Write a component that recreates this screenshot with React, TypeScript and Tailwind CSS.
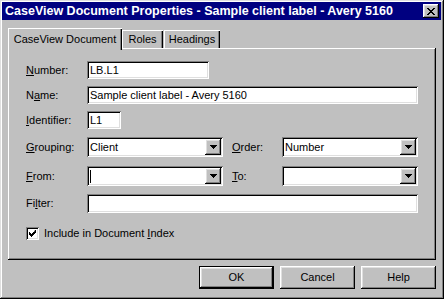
import React from "react";

const SUNKEN =
  "shadow-[inset_1px_1px_0_#808080,inset_-1px_-1px_0_#ffffff,inset_2px_2px_0_#000000,inset_-2px_-2px_0_#dfdfdf]";
const RAISED =
  "shadow-[inset_-1px_-1px_0_#000000,inset_1px_1px_0_#ffffff,inset_-2px_-2px_0_#808080,inset_2px_2px_0_#dfdfdf]";

function U({ children }: { children: React.ReactNode }) {
  return <span className="underline underline-offset-[1px]">{children}</span>;
}

function Label({ w, children }: { w: number; children: React.ReactNode }) {
  return (
    <div className="shrink-0 text-black" style={{ width: w }}>
      {children}
    </div>
  );
}

function Edit({ w, h = 18, value = "", caret = false }: { w: number; h?: number; value?: string; caret?: boolean }) {
  return (
    <div className={`bg-white ${SUNKEN} flex items-center pl-[3px] shrink-0`} style={{ width: w, height: h }}>
      {caret && <div className="w-[1px] h-[13px] bg-black" />}
      <span className="whitespace-nowrap leading-none">{value}</span>
    </div>
  );
}

function Arrow() {
  return (
    <svg width="7" height="4" viewBox="0 0 7 4" className="block">
      <path d="M0 0h7v1h-1v1h-1v1h-1v1h-1v-1h-1v-1h-1v-1h-1z" fill="#000" />
    </svg>
  );
}

function Combo({ w, value = "", caret = false }: { w: number; value?: string; caret?: boolean }) {
  return (
    <div className={`bg-white ${SUNKEN} flex items-center p-[2px] shrink-0`} style={{ width: w, height: 20 }}>
      <div className="flex-1 flex items-center pl-[1px] h-full">
        {caret && <div className="w-[1px] h-[13px] bg-black" />}
        <span className="whitespace-nowrap leading-none">{value}</span>
      </div>
      <div className={`w-[16px] h-[16px] bg-[#c0c0c0] ${RAISED} flex items-center justify-center`}>
        <Arrow />
      </div>
    </div>
  );
}

function Button({ label, def = false }: { label: string; def?: boolean }) {
  return (
    <div
      className={`w-[75px] h-[23px] flex items-center justify-center bg-[#c0c0c0] ${
        def ? "border border-black" : ""
      }`}
    >
      <div className={`w-full h-full flex items-center justify-center ${RAISED}`}>{label}</div>
    </div>
  );
}

export default function App() {
  return (
    <div
      className="w-[444px] h-[299px] bg-[#c0c0c0] flex flex-col text-[11px] text-black shadow-[inset_-1px_-1px_0_#000000,inset_1px_1px_0_#dfdfdf,inset_-2px_-2px_0_#808080,inset_2px_2px_0_#ffffff] overflow-hidden"
      style={{ fontFamily: '"Liberation Sans", Arial, sans-serif' }}
    >
      {/* Title bar */}
      <div className="mt-[2px] ml-[2px] mr-[3px] h-[18px] bg-[#000080] flex items-center pl-[3px] pr-[2px]">
        <div className="flex-1 text-white font-bold text-[12.5px] whitespace-nowrap">
          CaseView Document Properties - Sample client label - Avery 5160
        </div>
        <div className={`w-[16px] h-[14px] bg-[#c0c0c0] ${RAISED} flex items-center justify-center`}>
          <svg width="8" height="7" viewBox="0 0 8 7" className="block">
            <path
              d="M0 0h2v1h1v1h2v-1h1v-1h2v1h-1v1h-1v1h-1v1h1v1h1v1h1v1h-2v-1h-1v-1h-2v1h-1v1h-2v-1h1v-1h1v-1h1v-1h-1v-1h-1v-1h-1z"
              fill="#000"
            />
          </svg>
        </div>
      </div>

      {/* Tabs + panel */}
      <div className="ml-[8px] mr-[8px] mt-[8px] flex flex-col">
        <div className="flex items-end h-[20px]">
          <div className="relative z-10 h-[22px] -mb-[2px] w-[114px] bg-[#c0c0c0] shadow-[inset_1px_1px_0_#ffffff,inset_-1px_0_0_#000000,inset_-2px_0_0_#808080] flex items-start justify-center pt-[3px]">
            CaseView Document
          </div>
          <div className="h-[18px] w-[41px] shadow-[inset_1px_1px_0_#ffffff,inset_-1px_0_0_#000000,inset_-2px_0_0_#808080] flex items-center justify-center">
            Roles
          </div>
          <div className="h-[18px] w-[56px] ml-[1px] shadow-[inset_1px_1px_0_#ffffff,inset_-1px_0_0_#000000,inset_-2px_0_0_#808080] flex items-center justify-center">
            Headings
          </div>
        </div>
        <div className="h-[212px] shadow-[inset_-1px_-1px_0_#000000,inset_1px_1px_0_#ffffff,inset_-2px_-2px_0_#808080] pl-[18px] pt-[13px] flex flex-col">
          <div className="flex items-center h-[18px]">
            <Label w={61}>
              <U>N</U>umber:
            </Label>
            <Edit w={122} value="LB.L1" />
          </div>
          <div className="flex items-center h-[18px] mt-[7px]">
            <Label w={61}>
              N<U>a</U>me:
            </Label>
            <Edit w={331} value="Sample client label - Avery 5160" />
          </div>
          <div className="flex items-center h-[18px] mt-[7px]">
            <Label w={61}>
              <U>I</U>dentifier:
            </Label>
            <Edit w={34} value="L1" />
          </div>
          <div className="flex items-center h-[20px] mt-[8px]">
            <Label w={61}>
              <U>G</U>rouping:
            </Label>
            <Combo w={136} value="Client" />
            <div className="w-[9px]" />
            <Label w={50}>
              <U>O</U>rder:
            </Label>
            <Combo w={136} value="Number" />
          </div>
          <div className="flex items-center h-[20px] mt-[9px]">
            <Label w={61}>
              <U>F</U>rom:
            </Label>
            <Combo w={136} caret />
            <div className="w-[9px]" />
            <Label w={50}>
              <U>T</U>o:
            </Label>
            <Combo w={136} />
          </div>
          <div className="flex items-center h-[19px] mt-[8px]">
            <Label w={61}>
              Fi<U>l</U>ter:
            </Label>
            <Edit w={331} h={19} />
          </div>
          <div className="flex items-center h-[13px] mt-[14px]">
            <div className={`w-[13px] h-[13px] bg-white ${SUNKEN} flex items-center justify-center`}>
              <svg width="7" height="7" viewBox="0 0 7 7" className="block">
                <path d="M6 0h1v3h-1v1h-1v1h-1v1h-1v1h-1v-1h-1v-1h-1v-3h1v1h1v1h1v-1h1v-1h1z" fill="#000" />
              </svg>
            </div>
            <span className="ml-[5px]">
              Include in Document <U>I</U>ndex
            </span>
          </div>
        </div>
      </div>

      {/* Buttons */}
      <div className="mt-[6px] mr-[8px] flex justify-end gap-[6px]">
        <Button label="OK" def />
        <Button label="Cancel" />
        <Button label="Help" />
      </div>
    </div>
  );
}
